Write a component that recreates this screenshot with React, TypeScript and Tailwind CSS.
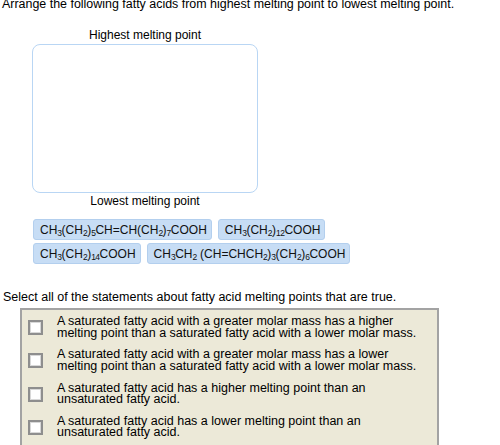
import React from "react";

type Part = string | { sub: string };

const acids: Part[][] = [
  ["CH", { sub: "3" }, "(CH", { sub: "2" }, ")", { sub: "5" }, "CH=CH(CH", { sub: "2" }, ")", { sub: "7" }, "COOH"],
  ["CH", { sub: "3" }, "(CH", { sub: "2" }, ")", { sub: "12" }, "COOH"],
  ["CH", { sub: "3" }, "(CH", { sub: "2" }, ")", { sub: "14" }, "COOH"],
  ["CH", { sub: "3" }, "CH", { sub: "2" }, " (CH=CHCH", { sub: "2" }, ")", { sub: "3" }, "(CH", { sub: "2" }, ")", { sub: "6" }, "COOH"],
];

const statements: [string, string][] = [
  [
    "A saturated fatty acid with a greater molar mass has a higher",
    "melting point than a saturated fatty acid with a lower molar mass.",
  ],
  [
    "A saturated fatty acid with a greater molar mass has a lower",
    "melting point than a saturated fatty acid with a lower molar mass.",
  ],
  ["A saturated fatty acid has a higher melting point than an", "unsaturated fatty acid."],
  ["A saturated fatty acid has a lower melting point than an", "unsaturated fatty acid."],
];

function Formula({ parts }: { parts: Part[] }) {
  return (
    <span className="whitespace-pre">
      {parts.map((p, i) =>
        typeof p === "string" ? (
          <span key={i}>{p}</span>
        ) : (
          <sub key={i} className="text-[8.5px] -tracking-[0.5px]">
            {p.sub}
          </sub>
        )
      )}
    </span>
  );
}

function Chip({ parts }: { parts: Part[] }) {
  return (
    <div className="h-[21px] flex items-center pl-[6px] pr-[4px] rounded-[3px] bg-[#c7ddf5] border border-[#b3cfee] text-[12px] leading-[14px] text-[#111]">
      <Formula parts={parts} />
    </div>
  );
}

export default function App() {
  return (
    <div
      className="w-[500px] h-[445px] overflow-hidden bg-white text-black text-[12px]"
      style={{ fontFamily: '"Liberation Sans", Arial, sans-serif' }}
    >
      <p className="-mt-[3px] pl-[2px] leading-[14px] text-[12.45px]">
        Arrange the following fatty acids from highest melting point to lowest melting point.
      </p>

      <div className="ml-[32px] w-[226px] mt-[17px]">
        <div className="text-center leading-[14px]">Highest melting point</div>
        <div className="mt-[2px] h-[149px] rounded-[8px] border border-[#b9d6f4] bg-white" />
        <div className="mt-[1px] text-center leading-[14px]">Lowest melting point</div>
      </div>

      <div className="ml-[33px] mt-[11px] flex flex-col gap-[3px]">
        <div className="flex gap-[6px]">
          <Chip parts={acids[0]} />
          <Chip parts={acids[1]} />
        </div>
        <div className="flex gap-[6px]">
          <Chip parts={acids[2]} />
          <Chip parts={acids[3]} />
        </div>
      </div>

      <p className="mt-[26px] pl-[3px] leading-[14px] text-[12.5px]">
        Select all of the statements about fatty acid melting points that are true.
      </p>

      <div className="ml-[20px] mt-[4px] w-[419px] h-[200px] border-2 border-[#a3a3a3] bg-[#ece9d8] pl-[6px] pt-[6px] flex flex-col gap-[10.3px]">
        {statements.map(([a, b], i) => (
          <div key={i} className="flex items-center h-[23px]">
            <div className="w-[15px] h-[15px] shrink-0 border-2 border-[#8e8e8e] bg-white shadow-[inset_0_0_0_1px_#d8d8d8]" />
            <div className="ml-[14px] leading-[11.5px] text-[12.5px]">
              <div>{a}</div>
              <div>{b}</div>
            </div>
          </div>
        ))}
      </div>
    </div>
  );
}
